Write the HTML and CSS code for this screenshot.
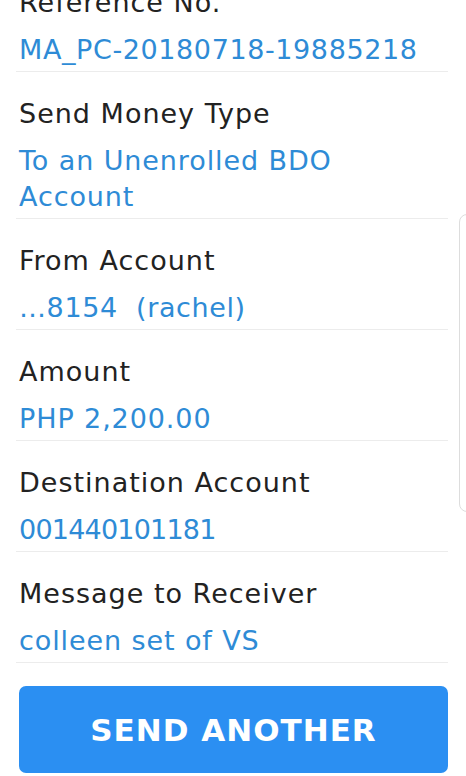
FILE: index.html
```html
<!DOCTYPE html>
<html>
<head>
<meta charset="utf-8">
<link rel="stylesheet" href="styles.css">
</head>
<body>
<div class="page">
  <div class="list">
    <div class="row">
      <div class="label">Reference No.</div>
      <div class="value tight">MA_PC-20180718-19885218</div>
    </div>
    <div class="row">
      <div class="label">Send Money Type</div>
      <div class="value">To an Unenrolled BDO<br>Account</div>
    </div>
    <div class="row">
      <div class="label">From Account</div>
      <div class="value tight">…8154&nbsp; (rachel)</div>
    </div>
    <div class="row">
      <div class="label">Amount</div>
      <div class="value">PHP 2,200.00</div>
    </div>
    <div class="row">
      <div class="label">Destination Account</div>
      <div class="value digits">001440101181</div>
    </div>
    <div class="row">
      <div class="label">Message to Receiver</div>
      <div class="value">colleen set of VS</div>
    </div>
  </div>
  <button class="btn">SEND ANOTHER</button>
</div>
<div class="edge"></div>
</body>
</html>
```
FILE: styles.css
```css
html, body {
  margin: 0;
  padding: 0;
  background: #ffffff;
  overflow: hidden;
}
body {
  width: 466px;
  height: 776px;
  position: relative;
  font-family: "DejaVu Sans", "Noto Sans", sans-serif;
}
.page {
  padding: 0 18px 0 16px;
}
.list {
  margin-top: -39px;
}
.row {
  border-bottom: 1px solid #ececec;
  padding: 22px 0 3px 3px;
}
.label {
  font-size: 27px;
  line-height: 40px;
  color: #222222;
  letter-spacing: 1px;
}
.value {
  font-size: 27px;
  line-height: 36px;
  margin-top: 9px;
  color: #2e8bd6;
  letter-spacing: 0.9px;
}
.value.tight {
  letter-spacing: 0.6px;
}
.value.digits {
  letter-spacing: -0.8px;
}
.btn {
  display: block;
  width: 429px;
  height: 87px;
  margin: 23px 0 0 3px;
  border: none;
  border-radius: 7px;
  background: #2b8ff2;
  color: #ffffff;
  font-family: "DejaVu Sans", sans-serif;
  font-weight: bold;
  font-size: 31px;
  letter-spacing: 1px;
}
.edge {
  position: absolute;
  left: 459px;
  top: 214px;
  width: 20px;
  height: 296px;
  border: 1px solid #dddddd;
  border-radius: 8px;
}
```
